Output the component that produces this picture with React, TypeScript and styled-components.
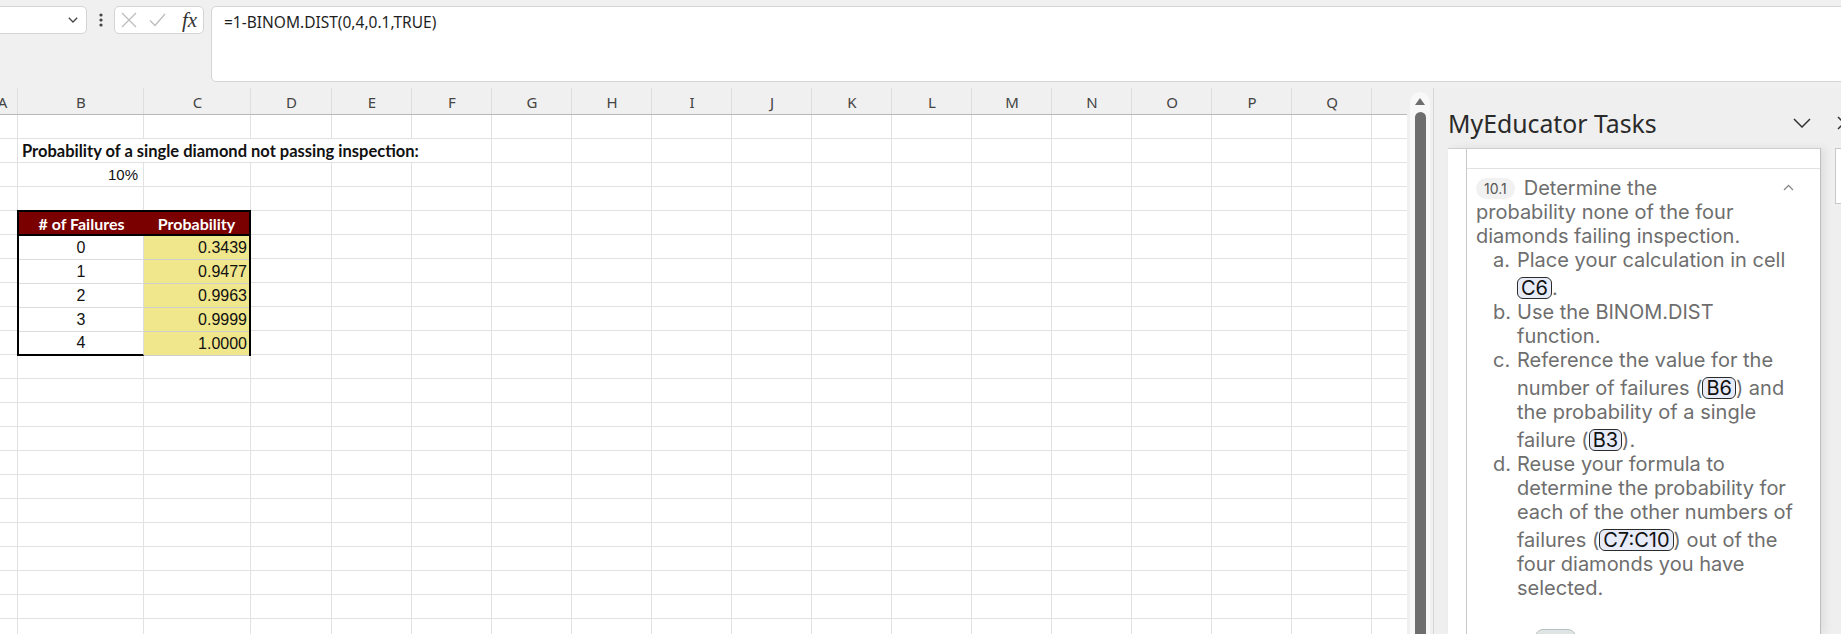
import React from 'react';
import styled, { createGlobalStyle } from 'styled-components';

const GlobalStyle = createGlobalStyle`
  html, body { margin: 0; padding: 0; }
  body {
    width: 1841px;
    height: 634px;
    overflow: hidden;
    background: #f0f0f0;
    font-family: "Noto Sans", "Liberation Sans", sans-serif;
  }
  #root { height: 634px; }
`;

const Page = styled.div`
  display: flex;
  flex-direction: column;
  width: 1841px;
  height: 634px;
  overflow: hidden;
  background: #f0f0f0;
`;

/* ---------- formula bar ---------- */
const FormulaBar = styled.div`
  display: flex;
  align-items: flex-start;
  height: 88px;
  padding-top: 6px;
  box-sizing: border-box;
  flex-shrink: 0;
`;

const NameBox = styled.div`
  width: 100px;
  height: 28px;
  margin-left: -13px;
  box-sizing: border-box;
  background: #fff;
  border: 1px solid #d4d4d4;
  border-radius: 5px;
  display: flex;
  align-items: center;
  justify-content: flex-end;
  padding-right: 8px;
`;

const DotsBox = styled.div`
  width: 27px;
  height: 28px;
  display: flex;
  align-items: center;
  justify-content: center;
`;

const CommandBox = styled.div`
  width: 90px;
  height: 28px;
  box-sizing: border-box;
  background: #fff;
  border: 1px solid #d4d4d4;
  border-radius: 5px;
  display: flex;
  align-items: center;
  padding-left: 6px;
  gap: 12px;
`;

const FxText = styled.span`
  font-family: "Liberation Serif", serif;
  font-style: italic;
  font-size: 21px;
  color: #333;
  margin-left: 4px;
  line-height: 20px;
`;

const FormulaInput = styled.div`
  flex: 1;
  margin-left: 7px;
  margin-right: -10px;
  height: 76px;
  box-sizing: border-box;
  background: #fff;
  border: 1px solid #d4d4d4;
  border-radius: 5px;
  padding: 4px 12px;
  font-family: "Noto Sans", sans-serif;
  font-size: 15.5px;
  line-height: 22px;
  color: #1f1f1f;
`;

/* ---------- main area ---------- */
const Main = styled.div`
  display: flex;
  flex: 1;
  min-height: 0;
`;

const SheetViewport = styled.div`
  width: 1407px;
  flex-shrink: 0;
  overflow: hidden;
  background: #fff;
`;

const Sheet = styled.div`
  display: grid;
  margin-left: -13px;
  grid-template-columns: 31px 126px 107px 81px repeat(14, 80px);
  grid-template-rows: 27px;
  grid-auto-rows: 24px;
`;

const ColHead = styled.div`
  background: #f0f0f0;
  border-bottom: 1px solid #b8b8b8;
  box-shadow: inset -1px 0 0 #dedede;
  box-sizing: border-box;
  display: flex;
  align-items: center;
  justify-content: center;
  font-family: "Noto Sans", sans-serif;
  font-size: 15px;
  color: #444;
  padding-top: 2px;
`;

const Cell = styled.div<{ $align?: 'left' | 'right' | 'center' }>`
  box-sizing: border-box;
  border-right: 1px solid #e1e1e1;
  border-bottom: 1px solid #e1e1e1;
  display: flex;
  align-items: center;
  justify-content: ${(p) =>
    p.$align === 'right' ? 'flex-end' : p.$align === 'center' ? 'center' : 'flex-start'};
  padding: 0 5px 0 4px;
  font-family: "Liberation Sans", Arial, sans-serif;
  font-size: 15px;
  color: #111;
  white-space: nowrap;
`;

const TitleCell = styled(Cell)`
  grid-column: span 5;
  font-family: Lato, "Liberation Sans", sans-serif;
  font-weight: 700;
  font-size: 16.5px;
  color: #111;
`;

const TableFrame = styled.div`
  grid-column: 2 / span 2;
  grid-row: 6 / span 6;
  margin: -1px 0 -1px -1px;
  position: relative;
  z-index: 1;
  border: 2px solid #000;
  border-bottom: none;
  display: grid;
  grid-template-columns: 125px 1fr;
  grid-template-rows: repeat(6, 24px);
`;

const TableHead = styled.div`
  background: #7a0000;
  border-bottom: 2px solid #000;
  box-sizing: border-box;
  display: flex;
  align-items: center;
  justify-content: center;
  font-family: Lato, "Liberation Sans", sans-serif;
  font-weight: 700;
  font-size: 16px;
  color: #fff;
`;

const NumCell = styled.div<{ $last?: boolean }>`
  background: #fff;
  box-sizing: border-box;
  border-right: 1px solid #dcdcdc;
  border-bottom: ${(p) => (p.$last ? '2px solid #000' : '1px solid #dcdcdc')};
  display: flex;
  align-items: center;
  justify-content: center;
  font-family: "Liberation Sans", Arial, sans-serif;
  font-size: 16px;
  color: #111;
`;

const ProbCell = styled.div`
  background: #f0e68c;
  box-sizing: border-box;
  border-bottom: 1px solid #cfcfcf;
  display: flex;
  align-items: center;
  justify-content: flex-end;
  padding-right: 2px;
  font-family: "Liberation Sans", Arial, sans-serif;
  font-size: 16px;
  color: #111;
`;

/* ---------- vertical scrollbar ---------- */
const VScroll = styled.div`
  width: 26px;
  flex-shrink: 0;
  display: flex;
  justify-content: center;
  padding-top: 4px;
  box-sizing: border-box;
`;

const ScrollTrack = styled.div`
  width: 20px;
  border-radius: 10px 10px 0 0;
  background: #f8f8f8;
  display: flex;
  flex-direction: column;
  align-items: center;
  padding-top: 6px;
  box-sizing: border-box;
`;

const ScrollArrow = styled.div`
  width: 0;
  height: 0;
  border-left: 5px solid transparent;
  border-right: 5px solid transparent;
  border-bottom: 7px solid #6e6e6e;
`;

const ScrollThumb = styled.div`
  width: 11px;
  flex: 1;
  margin-top: 7px;
  background: #6e6e6e;
  border-radius: 6px 6px 0 0;
`;

/* ---------- task pane ---------- */
const TaskPane = styled.div`
  flex: 1;
  min-width: 0;
  border-left: 1px solid #d6d6d6;
  background: #efefef;
  overflow: hidden;
  display: flex;
  flex-direction: column;
`;

const PaneHeader = styled.div`
  display: flex;
  align-items: center;
  height: 60px;
  padding: 20px 0 10px 14px;
  box-sizing: border-box;
  flex-shrink: 0;
`;

const PaneTitle = styled.div`
  flex: 1;
  font-family: "Noto Sans", sans-serif;
  font-size: 24.8px;
  line-height: 30px;
  color: #2a2a2a;
`;

const PaneIcon = styled.svg`
  flex-shrink: 0;
`;

const CloseIcon = styled.svg`
  flex-shrink: 0;
  margin-left: 26px;
  margin-right: -10px;
`;

const ContentRow = styled.div`
  flex: 1;
  display: flex;
  padding-left: 14px;
  min-height: 0;
`;

const ContentBox = styled.div`
  width: 373px;
  flex-shrink: 0;
  box-sizing: border-box;
  background: #fff;
  border-top: 1px solid #cfcfcf;
  border-right: 1px solid #bdbdbd;
  box-shadow: 4px 0 8px rgba(0, 0, 0, 0.07);
  padding-left: 18px;
  display: flex;
`;

const SideBox = styled.div`
  width: 20px;
  height: 56px;
  flex-shrink: 0;
  margin-left: 14px;
  box-sizing: border-box;
  background: #fff;
  border: 1px solid #c8c8c8;
  border-right: none;
`;

const Card = styled.div`
  flex: 1;
  border-left: 1px solid #c9c9c9;
  display: flex;
  flex-direction: column;
`;

const PrevStrip = styled.div`
  height: 20px;
  box-sizing: border-box;
  border-bottom: 1px solid #e2e2e2;
  flex-shrink: 0;
`;

const TaskItem = styled.div`
  padding: 7px 20px 0 9px;
  font-family: Inter, "Noto Sans", sans-serif;
  font-size: 20px;
  line-height: 24px;
  color: #6e6e6e;
`;

const TaskHeader = styled.div`
  display: flex;
  align-items: flex-start;
`;

const HeaderText = styled.div`
  flex: 1;
`;

const StepPill = styled.span`
  display: inline-block;
  height: 21px;
  line-height: 21px;
  padding: 0 8px;
  border-radius: 11px;
  background: #f1f1f1;
  font-size: 14px;
  color: #555;
  margin-right: 9px;
  vertical-align: 1px;
`;

const CollapseBox = styled.div`
  width: 44px;
  flex-shrink: 0;
  display: flex;
  justify-content: flex-end;
  padding: 8px 6px 0 0;
  box-sizing: border-box;
`;

const SubList = styled.ol`
  list-style: none;
  margin: 0;
  padding: 0 5px 0 17px;
`;

const SubItem = styled.li`
  display: flex;
`;

const Marker = styled.span`
  width: 24px;
  flex-shrink: 0;
`;

const SubBody = styled.span`
  flex: 1;
`;

const RefGroup = styled.span`
  white-space: nowrap;
`;

const CellRef = styled.span`
  display: inline-block;
  border: 1px solid #2b2b2b;
  border-radius: 6px;
  background: #e8ebf8;
  color: #111;
  padding: 0 3px;
  line-height: 20px;
  margin-top: 5px;
`;

const BottomButton = styled.div`
  width: 41px;
  height: 30px;
  margin: 29px 0 0 59px;
  box-sizing: border-box;
  background: #dfe4e4;
  border: 1px solid #b9c1c1;
  border-radius: 8px;
`;

/* ---------- data ---------- */
const COLS = ['A', 'B', 'C', 'D', 'E', 'F', 'G', 'H', 'I', 'J', 'K', 'L', 'M', 'N', 'O', 'P', 'Q', ''];
const ROWS = 22;
const TABLE = [
  ['0', '0.3439'],
  ['1', '0.9477'],
  ['2', '0.9963'],
  ['3', '0.9999'],
  ['4', '1.0000'],
];

const DataTable = () => (
  <TableFrame>
    <TableHead># of Failures</TableHead>
    <TableHead>Probability</TableHead>
    {TABLE.map(([n, p], i) => (
      <React.Fragment key={n}>
        <NumCell $last={i === TABLE.length - 1}>{n}</NumCell>
        <ProbCell>{p}</ProbCell>
      </React.Fragment>
    ))}
  </TableFrame>
);

const Ref = ({ children, paren }: { children: React.ReactNode; paren?: boolean }) =>
  paren ? (
    <RefGroup>
      (<CellRef>{children}</CellRef>)
    </RefGroup>
  ) : (
    <CellRef>{children}</CellRef>
  );

export default function App() {
  const cells: React.ReactNode[] = [];
  COLS.forEach((c, i) => cells.push(<ColHead key={'h' + i}>{c}</ColHead>));
  for (let r = 1; r <= ROWS; r++) {
    for (let c = 0; c < COLS.length; c++) {
      const key = `${r}-${c}`;
      if (r === 2 && c >= 2 && c <= 5) continue;
      if (r >= 5 && r <= 10 && (c === 1 || c === 2)) {
        if (r === 5 && c === 1) cells.push(<DataTable key="table" />);
        continue;
      }
      if (r === 2 && c === 1) {
        cells.push(
          <TitleCell key={key}>Probability of a single diamond not passing inspection:</TitleCell>
        );
        continue;
      }
      if (r === 3 && c === 1) {
        cells.push(
          <Cell key={key} $align="right">
            10%
          </Cell>
        );
        continue;
      }
      cells.push(<Cell key={key} />);
    }
  }

  return (
    <>
      <GlobalStyle />
      <Page>
        <FormulaBar>
          <NameBox>
            <svg width="10" height="6" viewBox="0 0 10 6">
              <polyline points="0.8,0.8 5,5 9.2,0.8" fill="none" stroke="#444" strokeWidth="1.3" />
            </svg>
          </NameBox>
          <DotsBox>
            <svg width="4" height="14" viewBox="0 0 4 14">
              <circle cx="2" cy="2" r="1.6" fill="#444" />
              <circle cx="2" cy="7" r="1.6" fill="#444" />
              <circle cx="2" cy="12" r="1.6" fill="#444" />
            </svg>
          </DotsBox>
          <CommandBox>
            <svg width="16" height="16" viewBox="0 0 16 16">
              <path d="M1 1 L15 15 M15 1 L1 15" stroke="#bdbdbd" strokeWidth="1.3" fill="none" />
            </svg>
            <svg width="17" height="14" viewBox="0 0 17 14">
              <polyline points="1,7.5 6,12.5 16,1" fill="none" stroke="#bdbdbd" strokeWidth="1.3" />
            </svg>
            <FxText>fx</FxText>
          </CommandBox>
          <FormulaInput>=1-BINOM.DIST(0,4,0.1,TRUE)</FormulaInput>
        </FormulaBar>

        <Main>
          <SheetViewport>
            <Sheet>{cells}</Sheet>
          </SheetViewport>

          <VScroll>
            <ScrollTrack>
              <ScrollArrow />
              <ScrollThumb />
            </ScrollTrack>
          </VScroll>

          <TaskPane>
            <PaneHeader>
              <PaneTitle>MyEducator Tasks</PaneTitle>
              <PaneIcon width="18" height="10" viewBox="0 0 18 10">
                <polyline points="1,1 9,9 17,1" fill="none" stroke="#333" strokeWidth="1.5" />
              </PaneIcon>
              <CloseIcon width="14" height="14" viewBox="0 0 14 14">
                <path d="M1 1 L13 13 M13 1 L1 13" stroke="#333" strokeWidth="1.5" fill="none" />
              </CloseIcon>
            </PaneHeader>

            <ContentRow>
              <ContentBox>
                <Card>
                  <PrevStrip />
                  <TaskItem>
                    <TaskHeader>
                      <HeaderText>
                        <StepPill>10.1</StepPill>
                        Determine the probability none of the four diamonds failing inspection.
                      </HeaderText>
                      <CollapseBox>
                        <svg width="11" height="7" viewBox="0 0 11 7">
                          <polyline points="1,6 5.5,1.5 10,6" fill="none" stroke="#8a8a8a" strokeWidth="1.3" />
                        </svg>
                      </CollapseBox>
                    </TaskHeader>
                    <SubList>
                      <SubItem>
                        <Marker>a.</Marker>
                        <SubBody>
                          Place your calculation in cell <RefGroup><Ref>C6</Ref>.</RefGroup>
                        </SubBody>
                      </SubItem>
                      <SubItem>
                        <Marker>b.</Marker>
                        <SubBody>Use the BINOM.DIST function.</SubBody>
                      </SubItem>
                      <SubItem>
                        <Marker>c.</Marker>
                        <SubBody>
                          Reference the value for the number of failures <Ref paren>B6</Ref> and the
                          probability of a single failure <RefGroup><Ref paren>B3</Ref>.</RefGroup>
                        </SubBody>
                      </SubItem>
                      <SubItem>
                        <Marker>d.</Marker>
                        <SubBody>
                          Reuse your formula to determine the probability for each of the other numbers
                          of failures <Ref paren>C7:C10</Ref> out of the four diamonds you have selected.
                        </SubBody>
                      </SubItem>
                    </SubList>
                    <BottomButton />
                  </TaskItem>
                </Card>
              </ContentBox>
              <SideBox />
            </ContentRow>
          </TaskPane>
        </Main>
      </Page>
    </>
  );
}
